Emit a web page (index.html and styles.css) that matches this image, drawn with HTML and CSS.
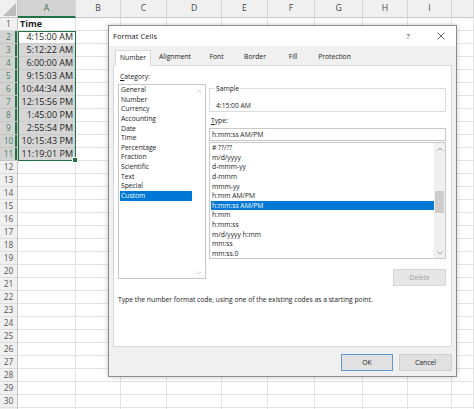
FILE: index.html
```html
<!DOCTYPE html>
<html>
<head>
<meta charset="utf-8">
<link rel="stylesheet" href="styles.css">
</head>
<body>
<div class="sheet">
  <div class="rowhead">
    <div class="corner"><svg width="18" height="18" viewBox="0 0 18 18"><polygon points="16,3 16,16 3,16" fill="#bdbdbd"/></svg></div>
    <div class="rnum">1</div>
    <div class="rnum sel">2</div>
    <div class="rnum sel">3</div>
    <div class="rnum sel">4</div>
    <div class="rnum sel">5</div>
    <div class="rnum sel">6</div>
    <div class="rnum sel">7</div>
    <div class="rnum sel">8</div>
    <div class="rnum sel">9</div>
    <div class="rnum sel">10</div>
    <div class="rnum sel">11</div>
    <div class="rnum">12</div>
    <div class="rnum">13</div>
    <div class="rnum">14</div>
    <div class="rnum">15</div>
    <div class="rnum">16</div>
    <div class="rnum">17</div>
    <div class="rnum">18</div>
    <div class="rnum">19</div>
    <div class="rnum">20</div>
    <div class="rnum">21</div>
    <div class="rnum">22</div>
    <div class="rnum">23</div>
    <div class="rnum">24</div>
    <div class="rnum">25</div>
    <div class="rnum">26</div>
    <div class="rnum">27</div>
    <div class="rnum">28</div>
    <div class="rnum">29</div>
    <div class="rnum">30</div>
  </div>
  <div class="col col-a">
    <div class="colhead sel">A</div>
    <div class="cell bold">Time</div>
    <div class="selection">
      <div class="cell time active">4:15:00 AM</div>
      <div class="cell time">5:12:22 AM</div>
      <div class="cell time">6:00:00 AM</div>
      <div class="cell time">9:15:03 AM</div>
      <div class="cell time">10:44:34 AM</div>
      <div class="cell time">12:15:56 PM</div>
      <div class="cell time">1:45:00 PM</div>
      <div class="cell time">2:55:54 PM</div>
      <div class="cell time">10:15:43 PM</div>
      <div class="cell time">11:19:01 PM</div>
    </div>
    <div class="colbody"></div>
  </div>
  <div class="col col-b"><div class="colhead">B</div><div class="colbody"></div></div>
  <div class="col col-c"><div class="colhead">C</div><div class="colbody"></div></div>
  <div class="col col-d"><div class="colhead">D</div><div class="colbody"></div></div>
  <div class="col col-e"><div class="colhead">E</div><div class="colbody"></div></div>
  <div class="col col-f"><div class="colhead">F</div><div class="colbody"></div></div>
  <div class="col col-g"><div class="colhead">G</div><div class="colbody"></div></div>
  <div class="col col-h"><div class="colhead">H</div><div class="colbody"></div></div>
  <div class="col col-i"><div class="colhead">I</div><div class="colbody"></div></div>
  <div class="col col-j"><div class="colhead"></div><div class="colbody"></div></div>
</div>

<div class="dialog">
  <div class="titlebar">
    <div class="title">Format Cells</div>
    <div class="help">?</div>
    <div class="close"><svg width="8" height="8" viewBox="0 0 8 8"><path d="M0.5 0.5 L7.5 7.5 M7.5 0.5 L0.5 7.5" stroke="#444" stroke-width="0.8" fill="none"/></svg></div>
  </div>
  <div class="dbody">
    <div class="tabs">
      <div class="tab active tab-number">Number</div>
      <div class="tab tab-align">Alignment</div>
      <div class="tab tab-font">Font</div>
      <div class="tab tab-border">Border</div>
      <div class="tab tab-fill">Fill</div>
      <div class="tab tab-prot">Protection</div>
    </div>
    <div class="panel">
      <div class="cols">
        <div class="leftcol">
          <div class="label cat-label"><u>C</u>ategory:</div>
          <div class="listbox catlist">
            <div class="items">
              <div class="item">General</div>
              <div class="item">Number</div>
              <div class="item">Currency</div>
              <div class="item">Accounting</div>
              <div class="item">Date</div>
              <div class="item">Time</div>
              <div class="item">Percentage</div>
              <div class="item">Fraction</div>
              <div class="item">Scientific</div>
              <div class="item">Text</div>
              <div class="item">Special</div>
              <div class="item selected">Custom</div>
            </div>
            <div class="catscroll">
              <svg width="6" height="4" viewBox="0 0 6 4"><path d="M0.5 3.5 L3 1 L5.5 3.5" stroke="#c4c4c4" stroke-width="0.8" fill="none"/></svg>
              <svg width="6" height="4" viewBox="0 0 6 4"><path d="M0.5 0.5 L3 3 L5.5 0.5" stroke="#c4c4c4" stroke-width="0.8" fill="none"/></svg>
            </div>
          </div>
        </div>
        <div class="rightcol">
          <div class="group">
            <div class="group-label">Sample</div>
            <div class="sample-value">4:15:00 AM</div>
          </div>
          <div class="label type-label"><u>T</u>ype:</div>
          <div class="input">h:mm:ss AM/PM</div>
          <div class="listbox typelist">
            <div class="items">
              <div class="item"># ??/??</div>
              <div class="item">m/d/yyyy</div>
              <div class="item">d-mmm-yy</div>
              <div class="item">d-mmm</div>
              <div class="item">mmm-yy</div>
              <div class="item">h:mm AM/PM</div>
              <div class="item selected">h:mm:ss AM/PM</div>
              <div class="item">h:mm</div>
              <div class="item">h:mm:ss</div>
              <div class="item">m/d/yyyy h:mm</div>
              <div class="item">mm:ss</div>
              <div class="item">mm:ss.0</div>
            </div>
            <div class="vscroll">
              <div class="arrow"><svg width="6" height="4" viewBox="0 0 6 4"><path d="M0.5 3.5 L3 1 L5.5 3.5" stroke="#8a8a8a" stroke-width="0.8" fill="none"/></svg></div>
              <div class="track"><div class="thumb"></div></div>
              <div class="arrow"><svg width="6" height="4" viewBox="0 0 6 4"><path d="M0.5 0.5 L3 3 L5.5 0.5" stroke="#8a8a8a" stroke-width="0.8" fill="none"/></svg></div>
            </div>
          </div>
          <div class="delete-row"><div class="btn disabled">Delete</div></div>
        </div>
      </div>
      <div class="desc">Type the number format code, using one of the existing codes as a starting point.</div>
    </div>
    <div class="buttons">
      <div class="btn ok">OK</div>
      <div class="btn cancel">Cancel</div>
    </div>
  </div>
</div>
</body>
</html>
```

FILE: styles.css
```css
html, body {
  margin: 0;
  padding: 0;
  background: #ffffff;
  width: 474px;
  height: 409px;
  overflow: hidden;
}

body {
  position: relative;
  font-family: "Open Sans", "Noto Sans", sans-serif;
}

/* ---------- spreadsheet ---------- */
.sheet {
  display: flex;
  height: 409px;
}

.rowhead {
  width: 18px;
  flex: none;
  background: #f0f0f0;
  border-right: 1px solid #c6c6c6;
  box-sizing: border-box;
}

.corner {
  height: 18px;
  box-sizing: border-box;
  border-bottom: 1px solid #c6c6c6;
}

.corner svg {
  display: block;
}

.rnum {
  height: 13px;
  box-sizing: border-box;
  border-bottom: 1px solid #dedede;
  font-size: 8.4px;
  line-height: 12px;
  color: #555;
  text-align: center;
}

.rnum.sel {
  background: #d3d3d3;
  color: #4a7f62;
  box-shadow: inset -2px 0 0 #217346;
  border-bottom-color: #c4c4c4;
}

.col {
  display: flex;
  flex-direction: column;
  flex: none;
}

.col-a { width: 58px; }
.col-b { width: 45px; }
.col-c { width: 46px; }
.col-d { width: 55px; }
.col-e { width: 46px; }
.col-f { width: 47px; }
.col-g { width: 48px; }
.col-h { width: 45px; }
.col-i { width: 44px; }
.col-j { flex: 1; }

.colhead {
  height: 18px;
  box-sizing: border-box;
  background: #f0f0f0;
  border-bottom: 1px solid #c6c6c6;
  border-right: 1px solid #d6d6d6;
  text-align: center;
  font-size: 8.6px;
  line-height: 17px;
  color: #444;
}

.colhead.sel {
  background: #d3d3d3;
  color: #3f6e55;
  border-bottom: 2px solid #217346;
}

.colbody {
  flex: 1;
  border-right: 1px solid #e2e2e2;
  background: repeating-linear-gradient(to bottom, transparent 0, transparent 12px, #e2e2e2 12px, #e2e2e2 13px);
}

.cell {
  height: 13px;
  box-sizing: border-box;
  border-bottom: 1px solid #e2e2e2;
  border-right: 1px solid #e2e2e2;
  font-size: 9px;
  line-height: 12px;
  color: #1e1e1e;
  padding: 0 2px;
  white-space: nowrap;
}

.cell.bold {
  font-weight: 700;
}

.selection {
  position: relative;
  outline: 1.5px solid #217346;
  outline-offset: -1px;
}

.selection::after {
  content: "";
  position: absolute;
  right: -2px;
  bottom: -2px;
  width: 4px;
  height: 4px;
  background: #217346;
  border: 1px solid #fff;
}

.cell.time {
  text-align: right;
  background: #d6d6d6;
  border-bottom-color: #cbcbcb;
  border-right-color: #d6d6d6;
}

.cell.time.active {
  background: #ffffff;
  border-right-color: #ffffff;
}

/* ---------- dialog ---------- */
.dialog {
  position: absolute;
  left: 108px;
  top: 25px;
  width: 349px;
  height: 352px;
  box-sizing: border-box;
  border: 1px solid #8c8c8c;
  box-shadow: 0 0 5px rgba(0, 0, 0, 0.22);
  background: #f0f0f0;
  display: flex;
  flex-direction: column;
  color: #1a1a1a;
  font-size: 6.75px;
}

.titlebar {
  height: 20px;
  flex: none;
  background: #ffffff;
  display: flex;
  align-items: center;
  padding-left: 4px;
}

.title {
  flex: 1;
  font-size: 7.6px;
  color: #222;
}

.help {
  width: 12px;
  text-align: center;
  font-size: 7.4px;
  color: #333;
  margin-right: 17px;
}

.close {
  width: 20px;
  margin-right: 5px;
  display: flex;
  justify-content: center;
}

.close svg {
  display: block;
}

.dbody {
  flex: 1;
  display: flex;
  flex-direction: column;
  padding: 4px 4px 5px 4px;
}

.tabs {
  display: flex;
  height: 15px;
  padding-left: 2px;
  position: relative;
  z-index: 1;
}

.tab {
  height: 15px;
  box-sizing: border-box;
  line-height: 14px;
  text-align: center;
  color: #1a1a1a;
  flex: none;
}

.tab.active {
  background: #ffffff;
  border: 1px solid #d9d9d9;
  border-bottom: none;
  height: 16px;
}

.tab-number { width: 36px; }
.tab-align { width: 48px; }
.tab-font { width: 35px; }
.tab-border { width: 42px; }
.tab-fill { width: 34px; }
.tab-prot { width: 49px; }

.panel {
  flex: 1;
  background: #ffffff;
  border: 1px solid #d9d9d9;
  padding: 6px 5px 0 4px;
}

.cols {
  display: flex;
  gap: 3px;
}

.leftcol {
  width: 88px;
  flex: none;
}

.rightcol {
  flex: 1;
  display: flex;
  flex-direction: column;
}

.label {
  line-height: 10px;
  height: 10px;
}

.label u {
  text-decoration-thickness: 0.6px;
  text-underline-offset: 1px;
}

.cat-label {
  margin-left: 2px;
}

.listbox {
  border: 1px solid #c8c8c8;
  box-sizing: border-box;
  display: flex;
  background: #fff;
}

.catlist {
  margin-top: 2px;
  height: 195px;
}

.items {
  flex: 1;
  padding-left: 1px;
}

.item {
  height: 9.64px;
  line-height: 9.64px;
  padding-left: 1px;
  white-space: nowrap;
}

.item.selected {
  background: #0078d7;
  color: #ffffff;
}

.catscroll {
  width: 13px;
  display: flex;
  flex-direction: column;
  justify-content: space-between;
  align-items: center;
  padding: 4px 0 3px;
}

.catscroll svg {
  display: block;
}

.group {
  margin-top: 16px;
  height: 24px;
  box-sizing: border-box;
  border: 1px solid #dcdcdc;
  padding-left: 5px;
}

.group-label {
  display: inline-block;
  background: #ffffff;
  padding: 0 1px;
  margin-top: -5px;
  line-height: 10px;
  vertical-align: top;
}

.sample-value {
  margin-top: 3px;
  line-height: 10px;
  padding-left: 1px;
}

.type-label {
  margin-top: 4px;
  margin-left: 2px;
}

.input {
  margin-top: 2px;
  height: 13px;
  box-sizing: border-box;
  border: 1px solid #c8c8c8;
  line-height: 11px;
  padding-left: 2px;
}

.typelist {
  margin-top: 1px;
  height: 117px;
  border-top-color: #c8c8c8;
}

.vscroll {
  width: 11px;
  flex: none;
  display: flex;
  flex-direction: column;
  background: #f0f0f0;
}

.arrow {
  height: 11px;
  display: flex;
  align-items: center;
  justify-content: center;
}

.arrow svg {
  display: block;
}

.track {
  flex: 1;
  padding-top: 37px;
}

.thumb {
  height: 22px;
  margin: 0 1px;
  background: #cdcdcd;
}

.delete-row {
  display: flex;
  justify-content: flex-end;
  margin-top: 10px;
}

.btn {
  height: 17px;
  box-sizing: border-box;
  border: 1px solid #cccccc;
  background: #e1e1e1;
  text-align: center;
  line-height: 15px;
  color: #1a1a1a;
}

.btn.disabled {
  width: 53px;
  color: #a0a0a0;
  background: #e6e6e6;
  border-color: #d6d6d6;
}

.desc {
  margin-top: 9px;
  line-height: 10px;
}

.buttons {
  display: flex;
  justify-content: flex-end;
  gap: 6px;
  margin-top: 7px;
}

.btn.ok {
  width: 52px;
  border-color: #5b9bd5;
}

.btn.cancel {
  width: 53px;
  border-color: #cfcfcf;
}
```
